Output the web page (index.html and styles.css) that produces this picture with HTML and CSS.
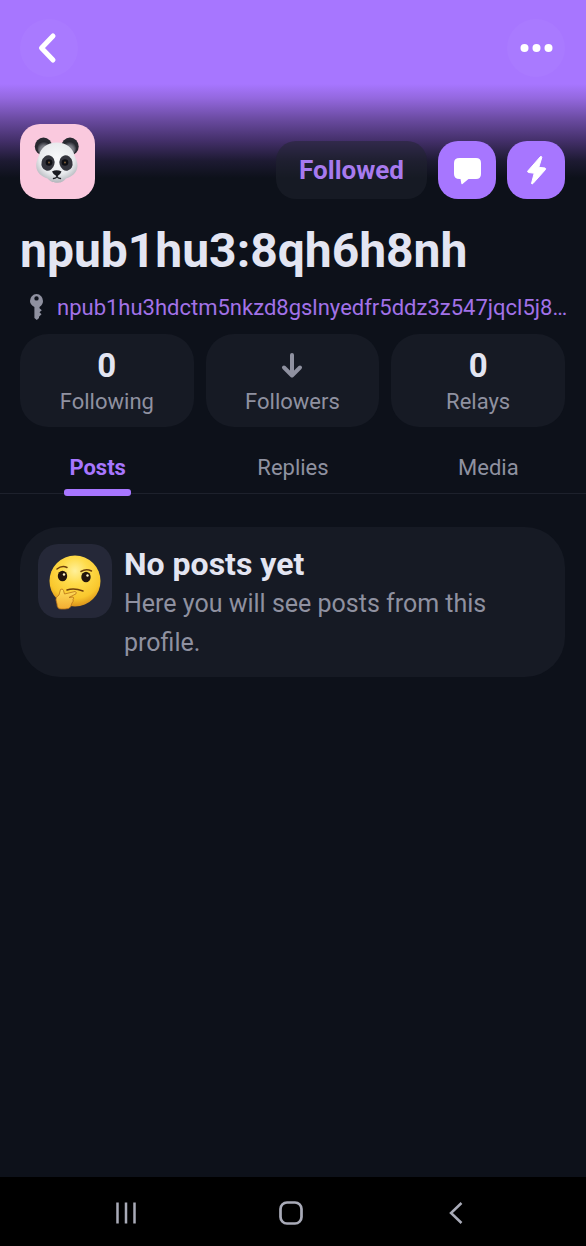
FILE: index.html
```html
<!DOCTYPE html>
<html lang="en">
<head>
<meta charset="utf-8">
<meta name="viewport" content="width=device-width, initial-scale=1">
<title>Profile</title>
<link rel="stylesheet" href="styles.css">
</head>
<body>
<div class="app">
  <header class="hero">
    <div class="topbar">
      <button class="round-btn" type="button" aria-label="Back">
        <svg width="58" height="58" viewBox="0 0 58 58" fill="none" stroke="#fff" stroke-width="5" stroke-linecap="round" stroke-linejoin="round"><path d="M33 17 21.500 29 33 41"/></svg>
      </button>
      <button class="round-btn" type="button" aria-label="More">
        <svg width="58" height="58" viewBox="0 0 58 58" fill="#fff"><circle cx="17.500" cy="29" r="4"/><circle cx="29.500" cy="29" r="4"/><circle cx="41.500" cy="29" r="4"/></svg>
      </button>
    </div>
    <div class="actions-row">
      <div class="avatar">
        <svg width="75" height="75" viewBox="0 0 75 75" role="img" aria-label="Panda">
          <defs>
            <radialGradient id="fur" cx=".5" cy=".38" r=".65"><stop offset="0" stop-color="#f8f9fb"/><stop offset=".65" stop-color="#e7e9ec"/><stop offset="1" stop-color="#a9adb3"/></radialGradient>
            <radialGradient id="ear" cx=".5" cy=".65" r=".6"><stop offset="0" stop-color="#9a9ba3"/><stop offset=".55" stop-color="#73747d"/><stop offset="1" stop-color="#25262e"/></radialGradient>
          </defs>
          <ellipse cx="23.500" cy="22.500" rx="8.700" ry="9" fill="#282930"/><ellipse cx="50" cy="22.500" rx="8.700" ry="9" fill="#282930"/>
          <ellipse cx="24" cy="24" rx="6.500" ry="7" fill="url(#ear)"/><ellipse cx="49.500" cy="24" rx="6.500" ry="7" fill="url(#ear)"/>
          <path d="M36.700 18.500C27 18.500 20.500 24 18.800 32 17 36 16 39 16.200 42 16.500 49 22 52.500 27.500 54.500 31 58.500 34 58.700 37 58.700S43 58.500 46 54.500C52 52.500 57 49 57.500 42 57.700 38 56 35 54.600 32 53 24 46.500 18.500 36.700 18.500Z" fill="url(#fur)"/>
          <ellipse cx="28" cy="39" rx="6.500" ry="7.800" transform="rotate(14 28 39)" fill="#34353d"/><ellipse cx="46" cy="39" rx="6.500" ry="7.800" transform="rotate(-14 46 39)" fill="#34353d"/>
          <circle cx="29" cy="38.500" r="3.300" fill="#0c0d12"/><circle cx="45" cy="38.500" r="3.300" fill="#0c0d12"/>
          <circle cx="29" cy="38.500" r="1" fill="#7c5d3b"/><circle cx="45" cy="38.500" r="1" fill="#7c5d3b"/>
          <path d="M32 47.500Q36.500 45 41.500 47.500 41 50 37 52.500 33 50.500 32 47.500Z" fill="#191a20"/>
          <path d="M37 51.500V53M33.500 54.500Q36 54.500 37 52.500 38 54.500 40.500 54.500" fill="none" stroke="#191a20" stroke-width="1.400" stroke-linecap="round"/>
        </svg>
      </div>
      <div class="actions">
        <button class="follow-btn" type="button">Followed</button>
        <button class="icon-btn" type="button" aria-label="Message">
          <svg width="58" height="58" viewBox="0 0 58 58" fill="#fff"><path d="M21.500 17H38Q43 17 43 22V33Q43 38 38 38H30.500L24.500 43Q23.500 43.700 23.300 42.500L22.500 38H21.500Q16 38 16 33V22Q16 17 21.500 17Z"/></svg>
        </button>
        <button class="icon-btn" type="button" aria-label="Zap">
          <svg width="58" height="58" viewBox="0 0 58 58" fill="#fff" stroke="#fff" stroke-width="1" stroke-linejoin="round"><path d="M33.500 15.500 20.800 30Q20.300 31.200 21.500 31.500L27.200 32.200 24.500 42.500Q24.800 43.500 26 42.500L38.500 28.500Q39 27.300 38 27L31.800 26.300 34.800 16.500Q34.700 15 33.500 15.500Z"/></svg>
        </button>
      </div>
    </div>
  </header>
  <main>
    <h1 class="name">npub1hu3:8qh6h8nh</h1>
    <div class="key-row">
      <svg width="16" height="28" viewBox="0 0 16 28" fill="none"><path fill="#8f91a0" fill-rule="evenodd" d="M7.500 1A6.700 6.700 0 0 1 14 8Q14 11.500 10.500 14V15.200L12.800 17.200 10.500 19.300 12.500 21.300 10 23.800V25L7.800 27 5.400 25V14Q1 11.500 1 8A6.700 6.700 0 0 1 7.500 1ZM7.500 3.200A2.200 2.200 0 1 0 7.500 7.600 2.200 2.200 0 1 0 7.500 3.200Z"/></svg>
      <a class="key" href="#key">npub1hu3hdctm5nkzd8gslnyedfr5ddz3z547jqcl5j8…</a>
    </div>
    <div class="stats">
      <button class="stat" type="button"><strong class="stat-value">0</strong><span>Following</span></button>
      <button class="stat" type="button">
        <span class="stat-value"><svg width="24" height="28" viewBox="0 0 24 28" fill="none" stroke="#8f91a0" stroke-width="4" stroke-linecap="round" stroke-linejoin="round"><path d="M12 4V24M4 16.500 12 24.500 20 16.500"/></svg></span>
        <span>Followers</span>
      </button>
      <button class="stat" type="button"><strong class="stat-value">0</strong><span>Relays</span></button>
    </div>
    <nav class="tabs" aria-label="Profile sections">
      <a class="tab active" href="#posts">Posts</a>
      <a class="tab" href="#replies">Replies</a>
      <a class="tab" href="#media">Media</a>
    </nav>
    <section class="empty">
      <div class="empty-icon">
        <svg width="74" height="74" viewBox="0 0 74 74" role="img" aria-label="Thinking face">
          <defs>
            <radialGradient id="face" cx=".5" cy=".3" r=".72"><stop offset="0" stop-color="#fff09a"/><stop offset=".35" stop-color="#ffdc4b"/><stop offset=".75" stop-color="#f9c72d"/><stop offset="1" stop-color="#d58b18"/></radialGradient>
            <linearGradient id="hand" x2="0" y2="1"><stop offset="0" stop-color="#ffe05c"/><stop offset="1" stop-color="#f2ac32"/></linearGradient>
          </defs>
          <circle cx="37" cy="37" r="25.500" fill="url(#face)"/>
          <g fill="none" stroke="#70400c" stroke-width="1.500" stroke-linecap="round"><path d="M19 25Q24 21 29 23.500M43 27.500Q48 24.500 53.500 27"/><path d="M29 46Q36 43.500 45 47"/></g>
          <ellipse cx="24.500" cy="32" rx="4.700" ry="5.300" fill="#24150d"/><ellipse cx="48" cy="33" rx="4.700" ry="5.300" fill="#24150d"/>
          <circle cx="26" cy="30.500" r="1.200" fill="#fff3c8"/><circle cx="49.500" cy="31.500" r="1.200" fill="#fff3c8"/>
          <path d="M22.500 45.500Q24.500 44 25.500 46.500L26.500 50 37 47.500Q39 48 38 49.800L31 53.500 35 53Q36.500 54 35 55.500 36 57 34 59L32.500 63Q31 65 27 65H23Q19 65 19 60L18 56Q17.500 53 21 51Z" fill="url(#hand)" stroke="#b9731b" stroke-width=".8" stroke-linejoin="round"/>
        </svg>
      </div>
      <div class="empty-text">
        <h2>No posts yet</h2>
        <p>Here you will see posts from this profile.</p>
      </div>
    </section>
  </main>
  <nav class="system-nav" aria-label="System">
    <button type="button" aria-label="Recent apps"><svg width="28" height="28" viewBox="0 0 28 28" stroke="#a9abb8" stroke-width="2.500"><path d="M5.500 3.500V24.500M14 3.500V24.500M22.500 3.500V24.500"/></svg></button>
    <button type="button" aria-label="Home"><svg width="28" height="28" viewBox="0 0 28 28" fill="none" stroke="#a9abb8" stroke-width="2.700"><rect x="3.500" y="3.500" width="21" height="21" rx="6.500"/></svg></button>
    <button type="button" aria-label="Back"><svg width="28" height="28" viewBox="0 0 28 28" fill="none" stroke="#a9abb8" stroke-width="2.500"><path d="M19.500 4 9 14 19.500 24"/></svg></button>
  </nav>
</div>
</body>
</html>
```
FILE: styles.css
```css
* { box-sizing: border-box; }
body {
  margin: 0;
  background: #0d111a;
  color: #e3e5f2;
  font-family: Roboto, "Liberation Sans", sans-serif;
}
h1, h2, p { margin: 0; }
button {
  padding: 0;
  border: 0;
  background: none;
  color: inherit;
  font: inherit;
}
a { color: inherit; text-decoration: none; }
svg { display: block; }
.app {
  display: flex;
  flex-direction: column;
  min-height: 100vh;
}
main { flex: 1; }
.hero {
  padding: 19px 21px 0 20px;
  background: linear-gradient(#a776ff 84px, #9468df 98px, #694a9f 120px, #432f69 141px, #1d1a32 161px, #0d111a 178px);
}
.topbar {
  display: flex;
  justify-content: space-between;
}
.round-btn {
  border-radius: 29px;
  background: rgba(255, 255, 255, 0.03);
}
.actions-row {
  display: flex;
  justify-content: space-between;
  align-items: flex-end;
  padding-top: 47px;
}
.avatar {
  border-radius: 20px;
  background: #fac9de;
}
.actions { display: flex; gap: 11px; }
.follow-btn {
  padding: 0 23px;
  border-radius: 20px;
  background: rgba(31, 36, 46, 0.5);
  color: #a77aee;
  font-size: 26px;
  font-weight: 700;
}
.icon-btn {
  border-radius: 20px;
  background: #a776ff;
}
.name {
  padding: 22px 20px 0;
  font-size: 48px;
  line-height: 60px;
  font-weight: 700;
}
.key-row {
  display: flex;
  align-items: center;
  gap: 12px;
  padding: 12px 8px 0 29px;
}
.key-row svg { flex: none; }
.key {
  overflow: hidden;
  padding-top: 2px;
  color: #a272e8;
  font-size: 22px;
  line-height: 26px;
  text-overflow: ellipsis;
  white-space: nowrap;
}
.stats {
  display: grid;
  grid-template-columns: repeat(3, 1fr);
  gap: 12px;
  padding: 13px 21px 0 20px;
}
.stat {
  display: flex;
  flex-direction: column;
  align-items: center;
  padding: 12px 0 8px;
  border-radius: 28px;
  background: #161a24;
  color: #8f91a0;
  font-size: 22px;
  line-height: 35px;
}
.stat-value {
  display: flex;
  align-items: center;
  height: 38px;
  color: #e3e5f2;
  font-size: 33px;
  font-weight: 700;
}
.tabs {
  display: grid;
  grid-template-columns: repeat(3, 1fr);
  margin-top: 24px;
  border-bottom: 1px solid #1d212c;
  color: #8f91a0;
  font-size: 22px;
  line-height: 34px;
}
.tab {
  justify-self: center;
  position: relative;
  padding-bottom: 8px;
}
.tab.active { color: #a776ff; font-weight: 700; }
.tab.active::after {
  content: "";
  position: absolute;
  right: -5px;
  bottom: -3px;
  left: -5px;
  height: 7px;
  border-radius: 3px;
  background: #a776ff;
}
.empty {
  display: flex;
  gap: 12px;
  margin: 33px 21px 0 20px;
  padding: 17px 18px 15px;
  border-radius: 40px;
  background: #161a24;
}
.empty-icon {
  flex: none;
  align-self: flex-start;
  border-radius: 20px;
  background: #252838;
}
.empty h2 { font-size: 32px; line-height: 40px; }
.empty p {
  color: #8f91a0;
  font-size: 25px;
  line-height: 39px;
}
.system-nav {
  display: grid;
  grid-template-columns: repeat(3, 1fr);
  padding: 22px 47px 19px 43px;
  background: #000;
}
.system-nav button { justify-self: center; }
```
